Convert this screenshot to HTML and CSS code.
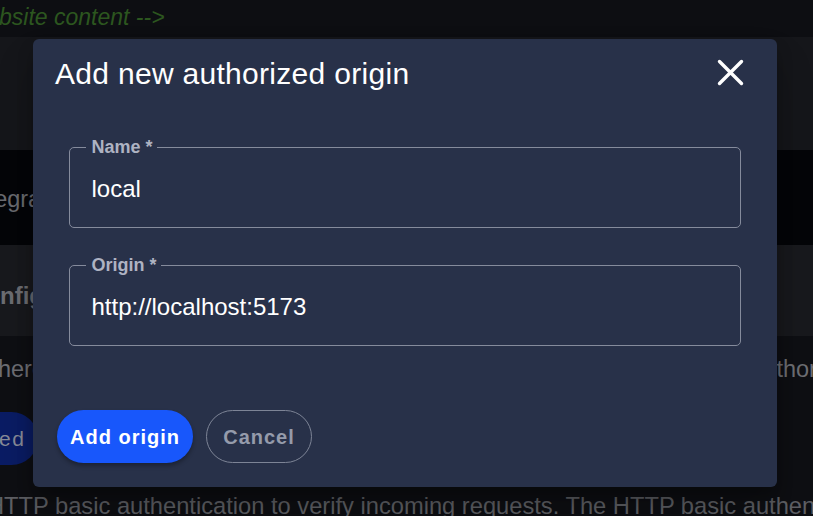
FILE: index.html
```html
<!DOCTYPE html>
<html lang="en">
<head>
<meta charset="utf-8">
<title>Add new authorized origin</title>
<link rel="stylesheet" href="styles.css">
</head>
<body>
<div class="page">
  <div class="band b-comment"><span class="comment">bsite content --&gt;</span></div>
  <div class="band b-nav"></div>
  <div class="band b-tabs"><span class="tab">Integrations</span></div>
  <div class="band b-head"><h2 class="sec-title">Configuration</h2></div>
  <div class="band b-body">
    <div class="desc-row"><span class="desc-left">where</span><span class="desc-right">authorized</span></div>
    <div class="bg-actions"><button class="bg-btn" type="button">Authorized</button></div>
    <p class="desc2">HTTP basic authentication to verify incoming requests. The HTTP basic authentication</p>
  </div>
</div>

<div class="modal" role="dialog" aria-labelledby="dlg-title">
  <div class="modal-head">
    <h1 class="modal-title" id="dlg-title">Add new authorized origin</h1>
    <button class="close" type="button" aria-label="Close">
      <svg width="27" height="27" viewBox="0 0 27 27"><path d="M2.5 2.5 L24.5 24.5 M24.5 2.5 L2.5 24.5" stroke="#ffffff" stroke-width="3.4" stroke-linecap="round" fill="none"/></svg>
    </button>
  </div>
  <div class="modal-body">
    <fieldset class="field">
      <legend class="field-label">Name *</legend>
      <input class="field-input" type="text" value="local">
    </fieldset>
    <fieldset class="field field-2">
      <legend class="field-label">Origin *</legend>
      <input class="field-input" type="text" value="http://localhost:5173">
    </fieldset>
  </div>
  <div class="modal-foot">
    <button class="btn btn-primary" type="button">Add origin</button>
    <button class="btn btn-outline" type="button">Cancel</button>
  </div>
</div>
</body>
</html>
```

FILE: styles.css
```css
html, body {
  margin: 0;
  padding: 0;
}
body {
  width: 813px;
  height: 516px;
  overflow: hidden;
  position: relative;
  background: #0e0f13;
  font-family: "Liberation Sans", Arial, sans-serif;
}

/* ---------- dimmed page behind the dialog ---------- */
.page {
  display: flex;
  flex-direction: column;
  overflow: hidden;
  height: 516px;
}
.band {
  flex-shrink: 0;
  overflow: hidden;
}
.b-comment {
  height: 37px;
  background: #0d0e12;
  box-sizing: border-box;
  padding-top: 4px;
}
.comment {
  display: block;
  font-style: italic;
  font-size: 23px;
  line-height: 27px;
  color: #2c561f;
  margin-left: -1px;
  white-space: nowrap;
}
.b-nav {
  height: 113px;
  background: #15161a;
}
.b-tabs {
  height: 95px;
  background: #040508;
  box-sizing: border-box;
  padding-top: 35px;
}
.tab {
  display: block;
  font-size: 23.5px;
  line-height: 28px;
  color: #6a6b70;
  margin-left: -32px;
  white-space: nowrap;
}
.b-head {
  height: 91px;
  background: #18191d;
  box-sizing: border-box;
  padding-top: 36px;
}
.sec-title {
  margin: 0 0 0 -32px;
  font-size: 24px;
  line-height: 30px;
  font-weight: bold;
  color: #6c6d72;
  white-space: nowrap;
}
.b-body {
  flex: 1;
  background: #0e0f13;
  box-sizing: border-box;
  padding-top: 19px;
}
.desc-row {
  display: flex;
  justify-content: space-between;
  font-size: 23.5px;
  line-height: 28px;
  color: #6d6e73;
  white-space: nowrap;
}
.desc-left {
  margin-left: -19px;
}
.desc-right {
  flex-shrink: 0;
  margin-right: -47px;
}
.bg-actions {
  margin-top: 29px;
  height: 53px;
  white-space: nowrap;
}
.bg-btn {
  display: block;
  height: 53px;
  margin: 0 0 0 -120px;
  padding: 0 13px 0 30px;
  border: none;
  border-radius: 27px;
  background: #0a1c64;
  color: #878b98;
  font-family: "Liberation Sans", Arial, sans-serif;
  font-weight: normal;
  font-size: 21px;
  letter-spacing: 1.5px;
}
.desc2 {
  margin: 27px 0 0 -13px;
  font-size: 23.7px;
  line-height: 28px;
  color: #5f6065;
  white-space: nowrap;
}

/* ---------- dialog ---------- */
.modal {
  position: absolute;
  left: 33px;
  top: 39px;
  width: 744px;
  box-sizing: border-box;
  background: #283149;
  border-radius: 6px;
  box-shadow: 0 11px 15px rgba(0, 0, 0, 0.25), 0 24px 38px rgba(0, 0, 0, 0.2);
  padding-bottom: 24px;
}
.modal-head {
  display: flex;
  justify-content: space-between;
  align-items: center;
  padding: 17px 33px 0 22px;
}
.modal-title {
  margin: 0;
  font-size: 30px;
  line-height: 36px;
  font-weight: normal;
  letter-spacing: 0.3px;
  color: #ffffff;
}
.close {
  display: flex;
  padding: 0;
  margin: 0 0 3px 0;
  border: none;
  background: transparent;
  width: 27px;
  height: 27px;
}
.modal-body {
  padding: 46px 36px 0 36px;
}
.field {
  margin: 0;
  min-width: 0;
  border: 1.5px solid #858b9c;
  border-radius: 5px;
  padding: 19px 20px 24px 21.5px;
}
.field-2 {
  margin-top: 28px;
}
.field-label {
  margin-left: -6px;
  padding: 0 4px 0 6px;
  font-size: 18px;
  line-height: 18px;
  font-weight: bold;
  color: #aeb3c2;
}
.field-input {
  display: block;
  width: 100%;
  height: 28px;
  margin: 0;
  padding: 0;
  border: none;
  outline: none;
  background: transparent;
  color: #ffffff;
  font-family: "Liberation Sans", Arial, sans-serif;
  font-size: 24px;
  line-height: 28px;
}
.modal-foot {
  display: flex;
  gap: 13px;
  padding: 64px 24px 0 24px;
}
.btn {
  height: 53px;
  border-radius: 27px;
  display: flex;
  align-items: center;
  justify-content: center;
  padding: 0;
  font-family: "Liberation Sans", Arial, sans-serif;
  font-weight: bold;
  font-size: 20px;
  line-height: 1;
  letter-spacing: 1px;
  box-sizing: border-box;
}
.btn-primary {
  width: 136px;
  border: none;
  background: #1857fb;
  color: #ffffff;
  box-shadow: 0 3px 4px rgba(0, 0, 0, 0.3);
}
.btn-outline {
  width: 106px;
  border: 1.5px solid #7d8496;
  background: transparent;
  color: #959bab;
}
```
